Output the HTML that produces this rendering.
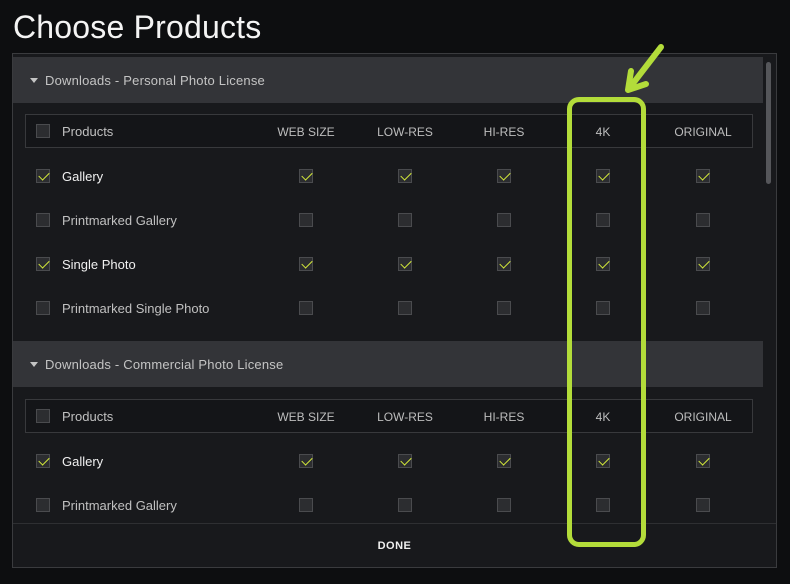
<!DOCTYPE html>
<html><head><meta charset="utf-8"><style>
*{margin:0;padding:0;box-sizing:border-box}
body{width:790px;height:584px;background:#0d0e10;font-family:"Liberation Sans",sans-serif;position:relative;overflow:hidden;color:#c9c9c9}
.a{position:absolute}
h1{position:absolute;left:13px;top:9px;font-size:32px;font-weight:400;color:#f4f4f4;letter-spacing:0.2px}
.modal{left:12px;top:53px;width:765px;height:515px;background:#18191c;border:1px solid #3a3b3e}
.sec{left:13px;width:750px;height:46px;background:#333438}
.sec span{position:absolute;left:32px;top:16px;font-size:13px;color:#c4c4c4;letter-spacing:0.2px}
.tri{position:absolute;left:17px;top:21px;width:0;height:0;border-left:4px solid transparent;border-right:4px solid transparent;border-top:5px solid #c4c4c4}
.hdr{left:25px;width:728px;height:34px;border:1px solid #38393c;background:#141518}
.t{position:absolute;font-size:12px;color:#bdbdbd;transform:translateX(-50%)}
.lbl{position:absolute;left:62px;font-size:13px;color:#c0c0c0}
.lbl.on{color:#f0f0f0}
.cb{position:absolute;width:14px;height:14px;background:#2c2d30;border:1px solid #4a4b4e}
.cb.c::after{content:"";position:absolute;left:2px;top:2px;width:9px;height:5px;border-left:1.6px solid #d8ee3a;border-bottom:1.6px solid #d8ee3a;transform:rotate(-45deg)}
.done{left:13px;top:523px;width:763px;height:44px;border-top:1px solid #2e2f32;background:#18191c;text-align:center;line-height:44px;font-size:11px;font-weight:700;color:#f0f0f0;letter-spacing:0.5px}
.sb{left:766px;top:62px;width:5px;height:122px;background:#55565a;border-radius:3px}
.gbox{left:567px;top:97px;width:79px;height:450px;border:5px solid #b3dc3a;border-radius:12px}
</style></head><body>
<h1>Choose Products</h1>
<div class="a modal"></div>
<div class="a sec" style="top:57px"><div class="tri"></div><span>Downloads - Personal Photo License</span></div>
<div class="a hdr" style="top:114px"></div>
<div class="a sec" style="top:341px"><div class="tri"></div><span>Downloads - Commercial Photo License</span></div>
<div class="a hdr" style="top:399px"></div>
<div class="a sb"></div>
<div id="c"></div>
<div class="a done">DONE</div>
<div class="a gbox"></div>
<svg class="a" style="left:0;top:0" width="790" height="584"><g stroke="#b3dc3a" stroke-width="6" stroke-linecap="round" fill="none"><line x1="661" y1="47" x2="631" y2="86"/><path d="M631 71 L628 90 L646 84" stroke-linejoin="round"/></g></svg>
<script>
var cols=[306,405,504,603,703],names=["WEB SIZE","LOW-RES","HI-RES","4K","ORIGINAL"],h="";
function head(y){h+='<div class="cb" style="left:36px;top:'+(y-7)+'px"></div><div class="lbl" style="top:'+(y-7)+'px">Products</div>';
for(var i=0;i<5;i++)h+='<div class="t" style="left:'+cols[i]+'px;top:'+(y-6)+'px">'+names[i]+'</div>';}
function row(y,n,on){h+='<div class="cb'+(on?' c':'')+'" style="left:36px;top:'+(y-7)+'px"></div><div class="lbl'+(on?' on':'')+'" style="top:'+(y-7)+'px">'+n+'</div>';
for(var i=0;i<5;i++)h+='<div class="cb'+(on?' c':'')+'" style="left:'+(cols[i]-7)+'px;top:'+(y-7)+'px"></div>';}
head(131);row(176,"Gallery",1);row(220,"Printmarked Gallery",0);row(264,"Single Photo",1);row(308,"Printmarked Single Photo",0);
head(416);row(461,"Gallery",1);row(505,"Printmarked Gallery",0);
document.getElementById("c").innerHTML=h;
</script>
</body></html>
